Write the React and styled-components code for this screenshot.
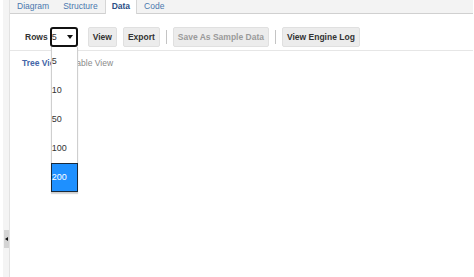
import React from "react";
import styled, { createGlobalStyle } from "styled-components";

const Global = createGlobalStyle`
  html, body { margin: 0; padding: 0; background: #fff; }
  body { font-family: "Liberation Sans", Arial, sans-serif; font-size: 8.5px; color: #333; }
  * { box-sizing: border-box; }
`;

const Page = styled.div`
  display: flex;
  width: 474px;
  height: 277px;
  overflow: hidden;
  background: #fff;
`;

const Rail = styled.div`
  width: 7px;
  flex: none;
  margin-left: 3px;
  background: #f4f4f4;
  border-right: 1px solid #e2e2e2;
  display: flex;
  flex-direction: column;
  justify-content: flex-end;
  padding-bottom: 29px;
`;

const Handle = styled.div`
  width: 5px;
  height: 18px;
  margin-left: 1px;
  background: #d4d4d4;
  display: flex;
  align-items: center;
  justify-content: center;
  &::after {
    content: "";
    width: 0;
    height: 0;
    border-top: 2px solid transparent;
    border-bottom: 2px solid transparent;
    border-right: 3px solid #111;
  }
`;

const Main = styled.div`
  flex: 1;
  margin-right: 1px;
  display: flex;
  flex-direction: column;
  position: relative;
`;

const TabBar = styled.div`
  height: 14px;
  display: flex;
  align-items: flex-end;
  background: #f3f3f3;
  border-bottom: 1px solid #d0d0d0;
  padding-left: 0;
`;

const Tab = styled.div`
  height: 14px;
  margin-bottom: -1px;
  padding: 0 6px 4px;
  display: flex;
  align-items: flex-end;
  line-height: 1;
  font-size: 8.5px;
  color: ${p => (p.$active ? "#2b4f86" : "#4a78ae")};
  font-weight: ${p => (p.$active ? "bold" : "normal")};
  background: ${p => (p.$active ? "#fff" : "transparent")};
  border-left: 1px solid ${p => (p.$active ? "#d6d6d6" : "transparent")};
  border-right: 1px solid ${p => (p.$active ? "#d6d6d6" : "transparent")};
`;

const Toolbar = styled.div`
  display: flex;
  align-items: center;
  padding: 12px 0 3px 15px;
  border-bottom: 1px solid #e6e6e6;
  height: 37px;
`;

const Label = styled.span`
  font-weight: bold;
  color: #333;
  margin-right: 2px;
`;

const SelectWrap = styled.div`
  position: relative;
  margin-right: 10px;
`;

const SelectBox = styled.div`
  width: 28px;
  height: 20px;
  border: 2px solid #111;
  border-radius: 3px;
  display: flex;
  align-items: center;
  justify-content: space-between;
  padding: 0 3px 0 0;
  font-size: 9px;
  color: #333;
  background: #fff;
  &::after {
    content: "";
    width: 0;
    height: 0;
    border-left: 3px solid transparent;
    border-right: 3px solid transparent;
    border-top: 4px solid #111;
  }
`;

const Options = styled.div`
  position: absolute;
  left: 1px;
  top: 20px;
  width: 27px;
  background: #fff;
  border: 1px solid #cfcfcf;
  border-top: none;
  box-shadow: 0 1px 1px rgba(0, 0, 0, 0.15);
  z-index: 5;
`;

const Option = styled.div`
  height: 29px;
  display: flex;
  align-items: center;
  font-size: 9px;
  color: ${p => (p.$selected ? "#fff" : "#333")};
  background: ${p => (p.$selected ? "#1e90ff" : "#fff")};
  border: ${p => (p.$selected ? "1px solid #1a2a3a" : "none")};
  margin: ${p => (p.$selected ? "0 -1px" : "0")};
`;

const Button = styled.div`
  height: 20px;
  padding: 0 4px;
  display: flex;
  align-items: center;
  background: #ececec;
  border: 1px solid #e0e0e0;
  border-radius: 2px;
  font-weight: bold;
  color: ${p => (p.$disabled ? "#9a9a9a" : "#333")};
  margin-right: 6px;
  white-space: nowrap;
`;

const Sep = styled.div`
  width: 1px;
  height: 14px;
  background: #c4c4c4;
  margin: 0 6px 0 0;
`;

const ViewTabs = styled.div`
  display: flex;
  align-items: center;
  padding: 7px 0 0 12px;
  gap: 11px;
`;

const ViewLink = styled.span`
  color: ${p => (p.$active ? "#4466a8" : "#8a8a8a")};
  font-weight: ${p => (p.$active ? "bold" : "normal")};
`;

export default function App() {
  const rows = ["5", "10", "50", "100", "200"];
  return (
    <>
      <Global />
      <Page>
        <Rail>
          <Handle />
        </Rail>
        <Main>
          <TabBar>
            <Tab>Diagram</Tab>
            <Tab>Structure</Tab>
            <Tab $active>Data</Tab>
            <Tab>Code</Tab>
          </TabBar>
          <Toolbar>
            <Label>Rows</Label>
            <SelectWrap>
              <SelectBox>5</SelectBox>
              <Options>
                {rows.map(r => (
                  <Option key={r} $selected={r === "200"}>{r}</Option>
                ))}
              </Options>
            </SelectWrap>
            <Button>View</Button>
            <Button>Export</Button>
            <Sep />
            <Button $disabled>Save As Sample Data</Button>
            <Sep />
            <Button>View Engine Log</Button>
          </Toolbar>
          <ViewTabs>
            <ViewLink $active>Tree View</ViewLink>
            <ViewLink>Table View</ViewLink>
          </ViewTabs>
        </Main>
      </Page>
    </>
  );
}
